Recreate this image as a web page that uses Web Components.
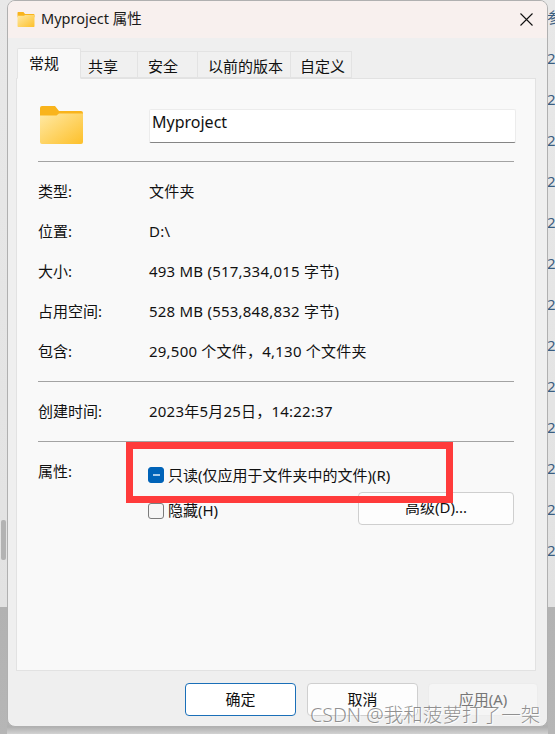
<!DOCTYPE html>
<html lang="zh">
<head>
<meta charset="utf-8">
<title>Myproject 属性</title>
<style>
  html, body { margin: 0; height: 734px; overflow: hidden; }
  body {
    font: 15px "Noto Sans", "Noto Sans CJK SC", sans-serif;
    color: #111;
    background: #e6e6e6;
  }
</style>
</head>
<body>
<desktop-shot>
  <props-dialog title-text="Myproject 属性">
    <win-tab slot="tabs" active w="64" pad="11">常规</win-tab>
    <win-tab slot="tabs" w="57" pad="7">共享</win-tab>
    <win-tab slot="tabs" w="60" pad="10">安全</win-tab>
    <win-tab slot="tabs" w="93" pad="10">以前的版本</win-tab>
    <win-tab slot="tabs" w="61" pad="9">自定义</win-tab>

    <general-page>
      <prop-row label="类型:">文件夹</prop-row>
      <prop-row label="位置:">D:\</prop-row>
      <prop-row label="大小:">493 MB (517,334,015 字节)</prop-row>
      <prop-row label="占用空间:">528 MB (553,848,832 字节)</prop-row>
      <prop-row label="包含:">29,500 个文件，4,130 个文件夹</prop-row>
      <hr-line slot="mid"></hr-line>
      <prop-row slot="mid" label="创建时间:">2023年5月25日，14:22:37</prop-row>
      <hr-line slot="mid"></hr-line>
    </general-page>

    <win-button slot="footer" primary>确定</win-button>
    <win-button slot="footer">取消</win-button>
    <win-button slot="footer" disabled>应用(A)</win-button>
  </props-dialog>
</desktop-shot>

<script>
const FOLDER_SVG = `
  <svg viewBox="0 0 43 38" width="100%" height="100%" aria-hidden="true">
    <defs>
      <linearGradient id="f" x1="0" y1="0" x2="1" y2="1">
        <stop offset="0" stop-color="#ffe9a4"/>
        <stop offset="1" stop-color="#fdc02a"/>
      </linearGradient>
    </defs>
    <path d="M0 2a2 2 0 0 1 2-2h13l4 5h22a2 2 0 0 1 2 2v6H0z" fill="#f9b41c"/>
    <path d="M0 9.5h16.5l2.5-2H43v28.500a2 2 0 0 1-2 2H2a2 2 0 0 1-2-2z" fill="url(#f)"/>
  </svg>`;

// the window behind the dialog ends at y=607
const BEHIND = 'linear-gradient(180deg, #e8e8e8 0, #e2e2e2 607px, #b2b2b2 607px, #b6b6b6 100%)';

class DesktopShot extends HTMLElement {
  constructor() {
    super();
    this.attachShadow({ mode: 'open' });
    const rows = ['参'].concat(Array(13).fill('20')).map(t => `<span>${t}</span>`).join('');
    this.shadowRoot.innerHTML = `
      <style>
        :host { display: grid; grid-template-columns: 7px 541px 7px; width: 555px; height: 734px; overflow: hidden; position: relative; background: ${BEHIND}; }
        .left { padding-top: 520px; box-sizing: border-box; }
        .thumb { width: 5px; height: 40px; margin-left: 1px; border-radius: 2px; background: #b3b3b3; }
        .main { display: flex; flex-direction: column; background: linear-gradient(180deg, transparent 0, transparent 720px, #b0b0b0 727px, #d2d2d2 734px); }
        .right { overflow: hidden; display: flex; flex-direction: column; gap: 20px; padding-top: 7px; white-space: nowrap; font: 15px "Noto Sans", "Noto Sans CJK SC", sans-serif; color: #3b5e80; }
        .right span { line-height: 21px; margin-left: -1px; }
        .mark { position: absolute; left: 310px; top: 703px; font-size: 19.6px; line-height: 24px; color: rgba(110,110,110,.75); text-shadow: 1px 1px 1px #fff; white-space: nowrap; font-family: "Noto Sans", "Noto Sans CJK SC", sans-serif; font-weight: 300; }
      </style>
      <div class="left"><div class="thumb"></div></div>
      <div class="main"><slot></slot></div>
      <div class="right">${rows}</div>
      <div class="mark">CSDN @我和菠萝打了一架</div>`;
  }
}

class PropsDialog extends HTMLElement {
  constructor() {
    super();
    this.attachShadow({ mode: 'open' });
    this.shadowRoot.innerHTML = `
      <style>
        :host { display: flex; flex-direction: column; height: 727px; box-sizing: border-box; background: #efefef; border-radius: 8px; border: 1px solid #b0b0b0; overflow: hidden; }
        .bar { flex: none; height: 37px; box-sizing: border-box; background: #f8f0ee; display: flex; align-items: center; padding: 0 15px 3px 9px; }
        .ico { width: 18px; height: 15px; margin-right: 6px; margin-top: 1px; }
        .name { flex: 1; font-size: 14.5px; line-height: 20px; color: #1a1a1a; }
        .x { width: 13px; height: 13px; margin-right: -1px; margin-top: 3px; }
        .tabs { flex: none; display: flex; align-items: flex-end; height: 31px; padding: 10px 0 0 9px; position: relative; z-index: 1; margin-bottom: -1px; }
        .panel { flex: none; height: 593px; box-sizing: border-box; margin: 0 11px 0 8px; background: #f9f9f9; border: 1px solid #e2e2e2; }
        .foot { flex: 1; display: flex; justify-content: flex-end; gap: 11px; padding: 12px 9px 0 0; }
      </style>
      <div class="bar">
        <span class="ico">${FOLDER_SVG}</span>
        <span class="name">${this.getAttribute('title-text')}</span>
        <svg class="x" viewBox="0 0 13 13" aria-hidden="true"><path d="M.5.5l12 12M12.5.5l-12 12" stroke="#111" stroke-width="1.1" fill="none"/></svg>
      </div>
      <div class="tabs"><slot name="tabs"></slot></div>
      <div class="panel"><slot></slot></div>
      <div class="foot"><slot name="footer"></slot></div>`;
  }
}

class WinTab extends HTMLElement {
  constructor() {
    super();
    this.attachShadow({ mode: 'open' });
    this.shadowRoot.innerHTML = `
      <style>
        :host { display: block; box-sizing: border-box; width: ${this.getAttribute('w')}px; padding-left: ${this.getAttribute('pad')}px; height: 27px; margin-bottom: 1px; border: 1px solid #e3e3e3; border-left: 0; background: #f0f0f0; font-size: 15px; line-height: 28px; color: #111; white-space: nowrap; }
        :host([active]) { height: 31px; margin-bottom: 0; background: #f9f9f9; border-left: 1px solid #e3e3e3; border-bottom-color: #f9f9f9; border-radius: 2px 2px 0 0; line-height: 28px; }
      </style>
      <slot></slot>`;
  }
}

class GeneralPage extends HTMLElement {
  constructor() {
    super();
    this.attachShadow({ mode: 'open' });
    this.shadowRoot.innerHTML = `
      <style>
        :host { display: block; padding: 0 21px; }
        .head { display: flex; height: 83px; box-sizing: border-box; border-bottom: 1px solid #a3a3a3; padding: 27px 0 0 2px; }
        .big { width: 43px; height: 38px; flex: none; }
        .input { flex: 1; height: 34px; margin: 3px -2px 0 66px; box-sizing: border-box; background: #fff; border: 1px solid #ececec; border-bottom: 1px solid #858585; padding: 0 2px; font-size: 16px; line-height: 24px; color: #111; border-radius: 2px; }
        .rows { padding-top: 9px; padding-bottom: 10px; }
        .attrs { display: grid; grid-template-columns: 89px 1fr; padding-top: 18px; }
        .lab { line-height: 22px; }
        .checks { display: flex; flex-direction: column; gap: 20px; padding-top: 7px; margin-left: 21px; }
        .second { display: flex; justify-content: space-between; align-items: flex-start; }
        .adv { margin-top: -11px; line-height: 29px; }
      </style>
      <div class="head">
        <span class="big">${FOLDER_SVG}</span>
        <div class="input">Myproject</div>
      </div>
      <div class="rows"><slot></slot></div>
      <slot name="mid"></slot>
      <div class="attrs">
        <div class="lab">属性:</div>
        <div class="checks">
          <win-check mixed>只读(仅应用于文件夹中的文件)(R)</win-check>
          <div class="second">
            <win-check low>隐藏(H)</win-check>
            <win-button class="adv" plain>高级(D)...</win-button>
          </div>
        </div>
      </div>
      <red-box></red-box>`;
  }
}

class PropRow extends HTMLElement {
  constructor() {
    super();
    this.attachShadow({ mode: 'open' });
    this.shadowRoot.innerHTML = `
      <style>
        :host { display: grid; grid-template-columns: 111px 1fr; height: 40px; align-items: center; line-height: 22px; white-space: nowrap; }
        .val { letter-spacing: .22px; }
      </style>
      <span>${this.getAttribute('label')}</span><span class="val"><slot></slot></span>`;
  }
}

class HrLine extends HTMLElement {
  constructor() {
    super();
    this.attachShadow({ mode: 'open' }).innerHTML = `
      <style>:host { display: block; height: 1px; background: #a3a3a3; margin-bottom: 9px; }
      :host(:last-of-type) { margin-top: 10px; margin-bottom: 0; }</style>`;
  }
}

class WinCheck extends HTMLElement {
  constructor() {
    super();
    this.attachShadow({ mode: 'open' });
    this.shadowRoot.innerHTML = `
      <style>
        :host { display: flex; align-items: center; gap: 4px; height: 16px; white-space: nowrap; font-size: 15px; }
        .box { width: 16px; height: 16px; box-sizing: border-box; border: 1px solid #7c7c7c; border-radius: 3px; background: #f6f6f6; display: flex; align-items: center; justify-content: center; flex: none; }
        :host([mixed]) .box { background: #0063b8; border-color: #0063b8; }
        :host([mixed]) .box::after { content: ""; width: 7px; height: 1.500px; background: #a9cbea; }
        .txt { margin-top: -2px; }
        :host([low]) .txt { margin-top: -3px; }
      </style>
      <span class="box"></span><span class="txt"><slot></slot></span>`;
  }
}

class WinButton extends HTMLElement {
  constructor() {
    super();
    this.attachShadow({ mode: 'open' });
    this.shadowRoot.innerHTML = `
      <style>
        :host { display: block; box-sizing: border-box; width: 111px; height: 33px; border: 1px solid #cfcfcf; border-radius: 4px; background: #fdfdfd; font-size: 15px; line-height: 31px; text-align: center; color: #111; }
        :host([primary]) { border-color: #1a6fb8; background: #fff; }
        :host([disabled]) { width: 110px; margin-left: -1px; background: #f5f5f5; border-color: #ececec; color: #777; }
        :host([plain]) { width: 156px; }
      </style>
      <slot></slot>`;
  }
}

class RedBox extends HTMLElement {
  constructor() {
    super();
    this.attachShadow({ mode: 'open' }).innerHTML = `
      <style>
        :host { position: absolute; left: 126px; top: 442px; width: 327px; height: 61px; box-sizing: border-box; border: 7px solid #ff3b3b; pointer-events: none; }
      </style>`;
  }
}

customElements.define('desktop-shot', DesktopShot);
customElements.define('props-dialog', PropsDialog);
customElements.define('win-tab', WinTab);
customElements.define('general-page', GeneralPage);
customElements.define('prop-row', PropRow);
customElements.define('hr-line', HrLine);
customElements.define('win-check', WinCheck);
customElements.define('win-button', WinButton);
customElements.define('red-box', RedBox);
</script>
</body>
</html>
